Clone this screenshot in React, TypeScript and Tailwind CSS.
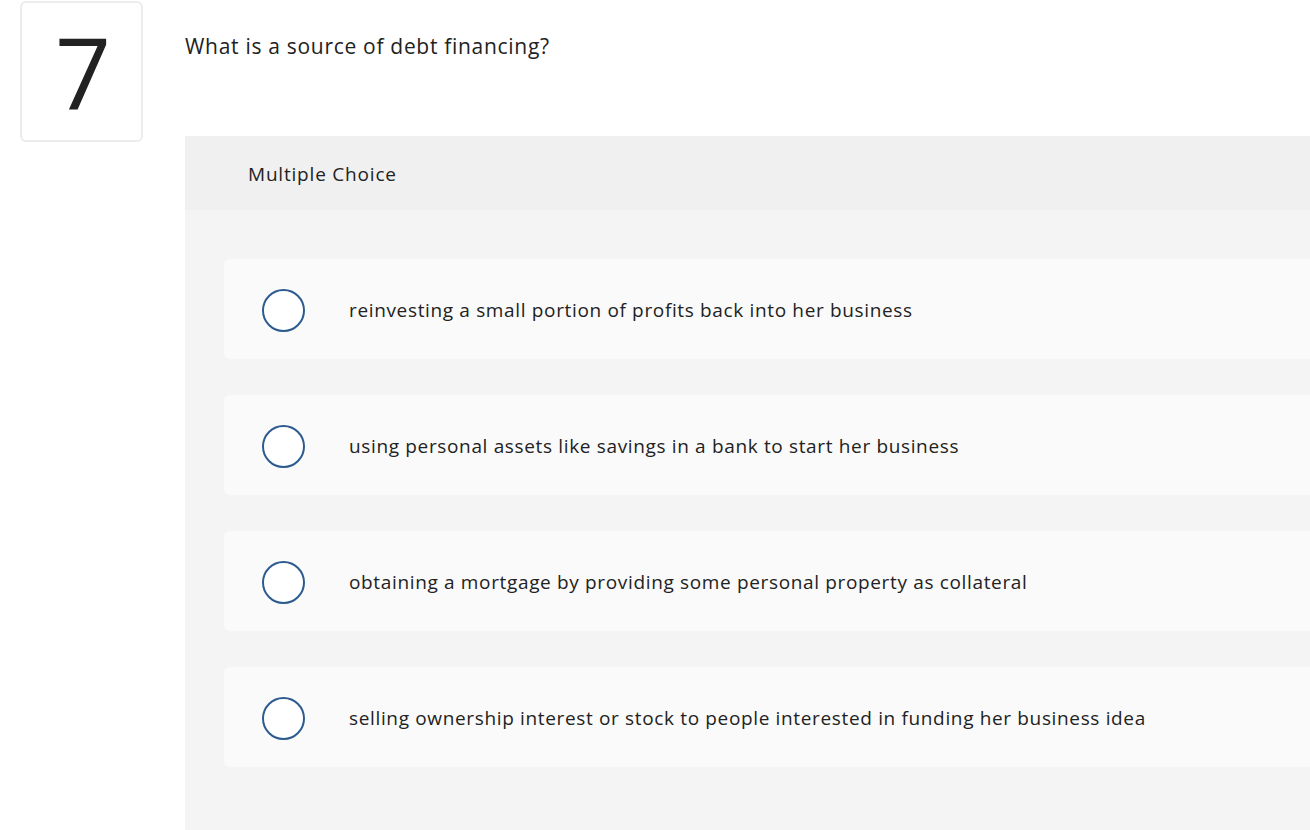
const choices = [
  "reinvesting a small portion of profits back into her business",
  "using personal assets like savings in a bank to start her business",
  "obtaining a mortgage by providing some personal property as collateral",
  "selling ownership interest or stock to people interested in funding her business idea"
];

const fontStack = { fontFamily: "'Open Sans', Lato, sans-serif" };

export default function App() {
  return (
    <div className="h-[830px] w-[1310px] overflow-hidden bg-white text-[#222]" style={fontStack}>
      <div className="flex w-[1400px] items-start">
        <div className="ml-5 mt-px flex h-[141px] w-[123px] shrink-0 items-center justify-center rounded-md border-2 border-[#ececec]">
          <span className="pl-[3px] pb-[2px] text-[98px] font-medium leading-none text-[#222]">7</span>
        </div>
        <div className="ml-[42px] flex w-[1200px] shrink-0 flex-col">
          <h1 className="mt-[31px] h-[105px] text-[21px] leading-[30px] tracking-[0.7px]">What is a source of debt financing?</h1>
          <section className="flex h-[700px] flex-col rounded-tl-sm bg-[#f4f4f4]">
            <div className="flex h-[74px] items-center bg-[#f0f0f0] pt-[3px] pl-[63px] text-[19px] tracking-[0.8px]">Multiple Choice</div>
            <div className="flex flex-col gap-[36px] pl-[39px] pt-[49px]">
              {choices.map((c) => (
                <label key={c} className="flex h-[100px] items-center rounded-md bg-[#fafafa] pt-[2px] pl-[38px]">
                  <span className="h-[43px] w-[43px] shrink-0 rounded-full border-2 border-[#2d5b8f] bg-white" />
                  <span className="ml-[44px] text-[19px] tracking-[0.65px]">{c}</span>
                </label>
              ))}
            </div>
          </section>
        </div>
      </div>
    </div>
  );
}
